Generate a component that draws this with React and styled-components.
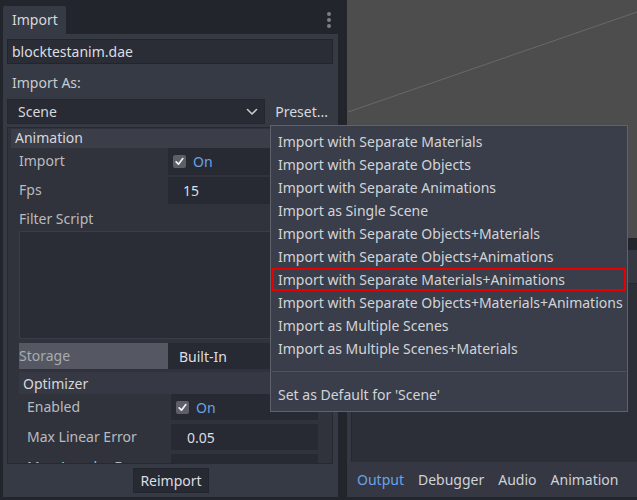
import React from 'react';
import styled, { createGlobalStyle } from 'styled-components';

const GlobalStyle = createGlobalStyle`
    html, body {
        margin: 0;
        padding: 0;
        background: #22252c;
    }
    body {
        font-family: "Noto Sans", "DejaVu Sans", sans-serif;
        font-size: 14px;
        color: #d0d2d6;
    }
`;

const presets = [
    'Import with Separate Materials',
    'Import with Separate Objects',
    'Import with Separate Animations',
    'Import as Single Scene',
    'Import with Separate Objects+Materials',
    'Import with Separate Objects+Animations',
    'Import with Separate Materials+Animations',
    'Import with Separate Objects+Materials+Animations',
    'Import as Multiple Scenes',
    'Import as Multiple Scenes+Materials'
];

const Check = () => (
    <CheckBox>
        <svg width="9" height="9" viewBox="0 0 9 9">
            <path d="M1.2 4.8 L3.5 7.2 L7.8 1.6" fill="none" stroke="#f2f2f2" strokeWidth="1.7" strokeLinecap="round" strokeLinejoin="round" />
        </svg>
    </CheckBox>
);

const Chevron = () => (
    <svg width="12" height="8" viewBox="0 0 12 8">
        <path d="M1.5 1.5 L6 6 L10.5 1.5" fill="none" stroke="#c8cace" strokeWidth="1.6" strokeLinecap="round" strokeLinejoin="round" />
    </svg>
);

class App extends React.Component {
    render() {
        return (
            <Root>
                <GlobalStyle />
                <LeftDock>
                    <TabBar>
                        <Tab>Import</Tab>
                        <Kebab><i /><i /><i /></Kebab>
                    </TabBar>
                    <PanelBody>
                        <FileField>blocktestanim.dae</FileField>
                        <FieldLabel>Import As:</FieldLabel>
                        <SelectRow>
                            <Select>
                                <span>Scene</span>
                                <Chevron />
                            </Select>
                            <FlatButton>Preset...</FlatButton>
                        </SelectRow>
                        <Inspector>
                            <SectionHeader>Animation</SectionHeader>
                            <Props>
                                <Row $top={0} $h={27}>
                                    <Label>Import</Label>
                                    <Value><Check /><OnText>On</OnText></Value>
                                </Row>
                                <Row $h={27}>
                                    <Label>Fps</Label>
                                    <Value $pad={15}>15</Value>
                                </Row>
                                <BlockLabel>Filter Script</BlockLabel>
                                <TextArea />
                                <Row $top={4}>
                                    <Label $selected>Storage</Label>
                                    <Value $pad={11}>Built-In</Value>
                                </Row>
                                <SubHeader>Optimizer</SubHeader>
                                <SubGroup>
                                    <Row $top={0}>
                                        <Label $nested>Enabled</Label>
                                        <Value><Check /><OnText>On</OnText></Value>
                                    </Row>
                                    <Row $top={4}>
                                        <Label $nested>Max Linear Error</Label>
                                        <Value $pad={16}>0.05</Value>
                                    </Row>
                                    <Row $top={4}>
                                        <Label $nested>Max Angular Error</Label>
                                        <Value $pad={16}>0.01</Value>
                                    </Row>
                                </SubGroup>
                            </Props>
                        </Inspector>
                        <ButtonRow>
                            <Button>Reimport</Button>
                        </ButtonRow>
                    </PanelBody>
                </LeftDock>
                <RightColumn>
                    <Viewport>
                        <svg width="100%" height="100%" viewBox="0 0 290 238" preserveAspectRatio="none">
                            <line x1="1" y1="112" x2="290" y2="12" stroke="#696969" strokeWidth="1" />
                        </svg>
                    </Viewport>
                    <BottomPanel>
                        <OutputArea />
                        <BottomTabs>
                            <BottomTab $active>Output</BottomTab>
                            <BottomTab>Debugger</BottomTab>
                            <BottomTab>Audio</BottomTab>
                            <BottomTab>Animation</BottomTab>
                        </BottomTabs>
                    </BottomPanel>
                </RightColumn>
                <Popup>
                    {presets.map((p, i) => (
                        <PopupItem key={p} $marked={i === 6}>{p}</PopupItem>
                    ))}
                    <PopupSeparator />
                    <PopupItem>Set as Default for 'Scene'</PopupItem>
                </Popup>
            </Root>
        );
    }
}

const Root = styled.div`
    position: relative;
    display: flex;
    width: 637px;
    height: 500px;
    box-sizing: border-box;
    padding: 0 0 3px 3px;
    background: #22252c;
    overflow: hidden;
`;

const LeftDock = styled.div`
    width: 335px;
    display: flex;
    flex-direction: column;
    padding-top: 6px;
`;

const TabBar = styled.div`
    height: 28px;
    display: flex;
    justify-content: space-between;
    align-items: stretch;
`;

const Tab = styled.div`
    width: 63px;
    box-sizing: border-box;
    padding-left: 9px;
    line-height: 28px;
    background: #363a45;
    color: #d6d8db;
    border-top-left-radius: 2px;
    border-top-right-radius: 2px;
`;

const Kebab = styled.div`
    width: 5px;
    margin-right: 6px;
    display: flex;
    flex-direction: column;
    justify-content: center;
    gap: 2px;

    & i {
        display: block;
        width: 4px;
        height: 4px;
        border-radius: 50%;
        background: #7c7f87;
    }
`;

const PanelBody = styled.div`
    flex: 1;
    display: flex;
    flex-direction: column;
    background: #363a45;
    padding: 5px 5px 4px 4px;
    min-height: 0;
`;

const FileField = styled.div`
    height: 25px;
    box-sizing: border-box;
    border: 1px solid #22252b;
    background: #2a2d36;
    padding-left: 4px;
    line-height: 23px;
    color: #dcdee1;
`;

const FieldLabel = styled.div`
    height: 35px;
    line-height: 37px;
    padding-left: 5px;
    color: #c9cbcf;
`;

const SelectRow = styled.div`
    height: 25px;
    display: flex;
    align-items: stretch;
    gap: 5px;
`;

const Select = styled.div`
    width: 259px;
    box-sizing: border-box;
    display: flex;
    align-items: center;
    justify-content: space-between;
    padding: 0 6px 0 10px;
    background: #282b33;
    border: 1px solid #24272d;
    color: #d6d8db;
`;

const FlatButton = styled.div`
    display: flex;
    align-items: center;
    padding: 0 5px;
    color: #d6d8db;
`;

const Inspector = styled.div`
    flex: 1;
    margin-top: 3px;
    min-height: 0;
    overflow: hidden;
    border: 1px solid #262931;
    background: #30333c;
    padding: 1px 14px 0 3px;
`;

const SectionHeader = styled.div`
    height: 19px;
    line-height: 18px;
    padding-left: 4px;
    background: #3b3e49;
    color: #d6d8db;
`;

const Props = styled.div`
    padding-left: 8px;
    display: flex;
    flex-direction: column;
`;

const Row = styled.div`
    display: flex;
    flex-shrink: 0;
    height: ${props => props.$h ? props.$h : 26}px;
    margin-top: ${props => props.$top !== undefined ? props.$top : 2}px;
`;

const Label = styled.div`
    width: ${props => props.$nested ? 148 : 149}px;
    box-sizing: border-box;
    padding-left: ${props => props.$nested ? 4 : 0}px;
    line-height: 26px;
    color: ${props => props.$selected ? '#a8abb0' : '#b8bbbf'};
    background: ${props => props.$selected ? '#555862' : 'transparent'};
`;

const Value = styled.div`
    flex: 1;
    display: flex;
    align-items: center;
    gap: 7px;
    padding-left: ${props => props.$pad ? props.$pad : 5}px;
    background: #272a32;
    color: #dcdee1;
`;

const CheckBox = styled.span`
    width: 13px;
    height: 13px;
    border-radius: 2px;
    background: #5c5f68;
    display: inline-flex;
    align-items: center;
    justify-content: center;
`;

const OnText = styled.span`
    color: #6aa2e8;
`;

const BlockLabel = styled.div`
    height: 27px;
    line-height: 29px;
    color: #b8bbbf;
`;

const TextArea = styled.div`
    height: 108px;
    flex-shrink: 0;
    box-sizing: border-box;
    border: 1px solid #3a3d47;
    background: #2a2d35;
`;

const SubHeader = styled.div`
    margin-top: 3px;
    height: 22px;
    line-height: 23px;
    padding-left: 4px;
    background: #363944;
    color: #d6d8db;
`;

const SubGroup = styled.div`
    padding-left: 4px;
    display: flex;
    flex-direction: column;
`;

const ButtonRow = styled.div`
    display: flex;
    justify-content: center;
    padding-top: 4px;
`;

const Button = styled.div`
    height: 25px;
    box-sizing: border-box;
    padding: 0 6px;
    line-height: 24px;
    background: #272a32;
    border: 1px solid #22252b;
    color: #dcdee1;
    margin-left: 2px;
`;

const RightColumn = styled.div`
    flex: 1;
    margin-left: 9px;
    display: flex;
    flex-direction: column;
`;

const Viewport = styled.div`
    height: 238px;
    background: #4d4d4d;

    & svg {
        display: block;
    }
`;

const BottomPanel = styled.div`
    flex: 1;
    margin-top: 12px;
    background: #353843;
    display: flex;
    flex-direction: column;
    padding: 33px 0 0 4px;
`;

const OutputArea = styled.div`
    flex: 1;
    background: #2c2f38;
    border-top: 1px solid #262930;
    border-left: 1px solid #262930;
`;

const BottomTabs = styled.div`
    height: 35px;
    display: flex;
    align-items: center;
    gap: 14px;
    padding-left: 6px;
`;

const BottomTab = styled.div`
    color: ${props => props.$active ? '#6aa2e8' : '#d0d2d6'};
`;

const Popup = styled.div`
    position: absolute;
    left: 270px;
    top: 125px;
    width: 358px;
    box-sizing: border-box;
    padding: 4px 1px 5px 1px;
    background: #3a3e4a;
    border: 1px solid #5e626d;
    display: flex;
    flex-direction: column;
`;

const PopupItem = styled.div`
    height: 23px;
    line-height: 23px;
    padding-left: 6px;
    color: #d2d4d8;
    white-space: nowrap;
    box-shadow: ${props => props.$marked ? 'inset 0 0 0 2px #e80000' : 'none'};
`;

const PopupSeparator = styled.div`
    height: 1px;
    margin: 11px 0 11px 0;
    background: #4f535e;
`;

export default App;
